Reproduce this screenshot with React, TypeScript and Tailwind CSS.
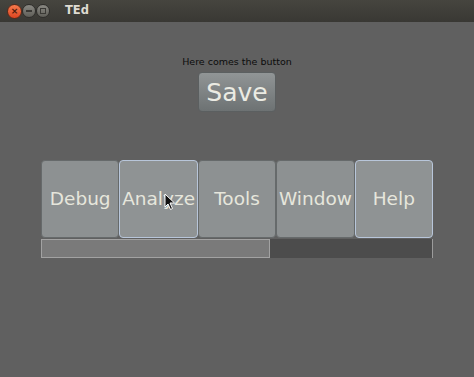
import { useState } from 'react'

const TOOLS = ['Debug', 'Analyze', 'Tools', 'Window', 'Help']
const FOCUSED = ['Analyze', 'Help']

export default function App() {
  const [progress] = useState(58.5)

  return (
    <div className="w-[474px] h-[377px] bg-[#606060] flex flex-col overflow-hidden" style={{ fontFamily: '"DejaVu Sans", sans-serif' }}>
      {/* Title bar */}
      <div className="h-[22px] bg-gradient-to-b from-[#46453f] to-[#393834] flex items-center pl-[7px] gap-0 shrink-0">
        <div className="w-[15px] h-[15px] rounded-full bg-gradient-to-b from-[#f67a4c] to-[#dc4420] border border-[#5a2a1a] flex items-center justify-center">
          <span className="text-[9px] leading-none font-bold text-[#4a1a0c]">×</span>
        </div>
        <div className="w-[14px] h-[14px] rounded-full bg-gradient-to-b from-[#8a8983] to-[#5f5e58] border border-[#2f2e2b] flex items-center justify-center">
          <div className="w-[6px] h-[1.5px] bg-[#3a3935]" />
        </div>
        <div className="w-[14px] h-[14px] rounded-full bg-gradient-to-b from-[#8a8983] to-[#5f5e58] border border-[#2f2e2b] flex items-center justify-center">
          <div className="w-[6px] h-[6px] border border-[#3a3935]" />
        </div>
        <span className="ml-[15px] text-[11.5px] font-bold text-[#dfdbd2]">TEd</span>
      </div>

      {/* Content */}
      <div className="flex flex-col items-center pt-[34px]">
        <p className="text-[9.5px] leading-[12px] text-[#0c0c0c]">Here comes the button</p>
        <button className="mt-[4px] w-[78px] h-[40px] rounded-[4px] bg-gradient-to-b from-[#919596] to-[#6d7273] border border-[#5b5f60] flex items-center justify-center">
          <span className="text-[25px] text-[#ebebe3] leading-none">Save</span>
        </button>

        <div className="relative mt-[48px] w-[392px]">
          <div className="grid grid-cols-5 h-[78px]">
            {TOOLS.map(t => (
              <div
                key={t}
                className={
                  FOCUSED.includes(t)
                    ? 'rounded-[4px] bg-[#8f9394] border border-[#b8c6da] flex items-center justify-center overflow-hidden'
                    : 'rounded-[4px] bg-[#8d9192] border border-[#666a6b] flex items-center justify-center overflow-hidden'
                }
              >
                <span className="text-[18.5px] text-[#e6e6dc] whitespace-nowrap">{t}</span>
              </div>
            ))}
          </div>

          {/* Progress bar */}
          <div className="mt-[1px] h-[19px] bg-[#4c4c4c] border-r border-[#9c9c9c] flex">
            <div className="h-full bg-[#7a7a7a] border border-[#a2a2a2]" style={{ width: `${progress}%` }} />
          </div>

          {/* Mouse cursor */}
          <svg className="absolute left-[123px] top-[33px]" width="12" height="18" viewBox="0 0 12 18">
            <path d="M1 1 L1 14 L4 11 L6.5 16.5 L8.5 15.5 L6 10 L10.5 10 Z" fill="#111" stroke="#fff" strokeWidth="1" strokeLinejoin="round" />
          </svg>
        </div>
      </div>
    </div>
  )
}
